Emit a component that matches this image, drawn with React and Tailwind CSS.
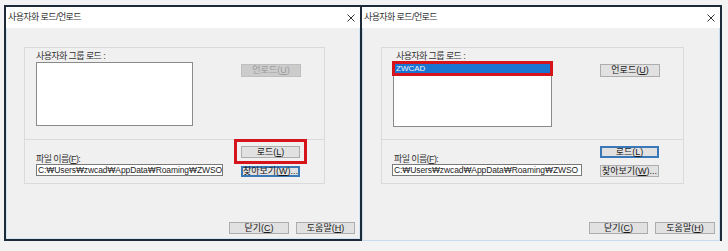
import React from "react";

const FONT = "font-['Liberation_Sans','Noto_Sans_CJK_KR',sans-serif]";

// 윈도우 기본 버튼
function Btn({ className = "", disabled = false, focused = false, children }) {
  let look = "bg-[#e1e1e1] border border-[#adadad] text-[#1a1a1a]";
  if (disabled) look = "bg-[#cccccc] border border-[#bfbfbf] text-[#9c9c9c]";
  if (focused) look = "bg-[#e1e1e1] border-2 border-[#3a78b8] text-[#1a1a1a]";
  return (
    <div className={`flex items-center justify-center text-[9px] leading-none whitespace-nowrap ${look} ${className}`}>
      {children}
    </div>
  );
}

const U = ({ children }) => <span className="underline">{children}</span>;

function CloseX() {
  return (
    <svg width="8" height="8" viewBox="0 0 8 8" className="shrink-0">
      <path d="M0.5 0.5L7.5 7.5M7.5 0.5L0.5 7.5" stroke="#333" strokeWidth="1" fill="none" />
    </svg>
  );
}

function TitleBar() {
  return (
    <div className="h-[21px] bg-white flex items-center justify-between pl-[2px] pr-[5px] shrink-0">
      <span className="text-[9px] leading-none text-[#333] tracking-[-0.6px]">사용자화 로드/언로드</span>
      <CloseX />
    </div>
  );
}

function Highlight({ className = "" }) {
  return <span className={`absolute border-[3px] border-[#d6141c] pointer-events-none ${className}`} />;
}

function PathField({ className = "" }) {
  return (
    <div className={`h-[12px] bg-white border border-[#7a7a7a] flex items-center pl-[1px] text-[8.5px] leading-none text-[#222] overflow-hidden whitespace-nowrap font-['Liberation_Sans','DejaVu_Sans',sans-serif] tracking-[-0.1px] ${className}`}>
      C:₩Users₩zwcad₩AppData₩Roaming₩ZWSO
    </div>
  );
}

function LeftDialog() {
  return (
    <div className="w-[358px] h-[236px] border-2 border-[#1d2a37] flex flex-col shrink-0">
      <TitleBar />
      <div className="flex-1 bg-[#f0f0f0] border-x border-b border-[#d3e5f5] flex flex-col">
        {/* 그룹 박스 */}
        <div className="ml-[17px] mt-[19px] w-[301px] h-[137px] border border-[#dadada] flex flex-col">
          <div className="h-[91px] flex">
            <div className="pl-[11px] pt-[4px] flex flex-col">
              <span className="h-[10px] text-[9px] leading-[9px] text-[#333] tracking-[-0.6px]">사용자화 그룹 로드 :</span>
              <div className="w-[157px] h-[64px] bg-white border border-[#8a8a8a]" />
            </div>
            <div className="ml-[48px] pt-[16px]">
              <Btn disabled className="w-[60px] h-[13px]">언로드(<U>U</U>)</Btn>
            </div>
          </div>
          <div className="flex-1 border-t border-[#dadada] flex">
            <div className="pl-[11px] pt-[15px] flex flex-col">
              <span className="h-[9px] text-[9px] leading-[9px] text-[#333] tracking-[-0.6px]">파일 이름(<U>F</U>):</span>
              <PathField className="w-[187px]" />
            </div>
            <div className="ml-[18px] pt-[6px] flex flex-col">
              <div className="relative">
                <Btn className="w-[59px] h-[12px]">로드(<U>L</U>)</Btn>
                <Highlight className="-left-[7px] -right-[7px] -top-[7px] -bottom-[6px]" />
              </div>
              <Btn focused className="mt-[8px] w-[59px] h-[11px]">찾아보기(<U>W</U>)...</Btn>
            </div>
          </div>
        </div>
        {/* 하단 버튼 */}
        <div className="mt-[38px] pr-[4px] flex justify-end gap-[7px]">
          <Btn className="w-[60px] h-[12px]">닫기(<U>C</U>)</Btn>
          <Btn className="w-[59px] h-[12px]">도움말(<U>H</U>)</Btn>
        </div>
      </div>
    </div>
  );
}

function RightDialog() {
  return (
    <div className="w-[360px] h-[236px] border-t-2 border-r-2 border-[#1d2a37] flex flex-col shrink-0">
      <TitleBar />
      <div className="flex-1 bg-[#f0f0f0] border-x border-b border-[#c9dcee] flex flex-col">
        <div className="ml-[18px] mt-[19px] w-[303px] h-[137px] border border-[#dadada] flex flex-col">
          <div className="h-[91px] flex">
            <div className="pl-[11px] pt-[4px] flex flex-col">
              <span className="ml-[3px] h-[10px] text-[9px] leading-[9px] text-[#333] tracking-[-0.6px]">사용자화 그룹 로드 :</span>
              <div className="w-[159px] h-[65px] bg-white border border-[#8a8a8a] p-[1px]">
                <div className="relative">
                  <div className="h-[9px] bg-[#1a74d2] text-[#f4f8ff] text-[8px] leading-[9px] pl-[1px] font-light">ZWCAD</div>
                  <Highlight className="-left-[3px] -right-[3px] -top-[3px] -bottom-[3px]" />
                </div>
              </div>
            </div>
            <div className="ml-[48px] pt-[16px]">
              <Btn className="w-[60px] h-[13px]">언로드(<U>U</U>)</Btn>
            </div>
          </div>
          <div className="flex-1 border-t border-[#dadada] flex">
            <div className="pl-[10px] pt-[15px] flex flex-col">
              <span className="ml-[2px] h-[9px] text-[9px] leading-[9px] text-[#333] tracking-[-0.6px]">파일 이름(<U>F</U>):</span>
              <PathField className="w-[190px]" />
            </div>
            <div className="ml-[18px] pt-[6px] flex flex-col">
              <Btn focused className="w-[59px] h-[12px]">로드(<U>L</U>)</Btn>
              <Btn className="mt-[7px] w-[59px] h-[12px]">찾아보기(<U>W</U>)...</Btn>
            </div>
          </div>
        </div>
        <div className="mt-[38px] pr-[4px] flex justify-end gap-[7px]">
          <Btn className="w-[59px] h-[12px]">닫기(<U>C</U>)</Btn>
          <Btn className="w-[60px] h-[12px]">도움말(<U>H</U>)</Btn>
        </div>
      </div>
    </div>
  );
}

export default function App() {
  return (
    <div className={`w-[728px] h-[251px] bg-[#f3f3f3] ${FONT}`}>
      <div className="pt-[5px] pl-[4px] flex">
        <LeftDialog />
        <RightDialog />
      </div>
    </div>
  );
}
